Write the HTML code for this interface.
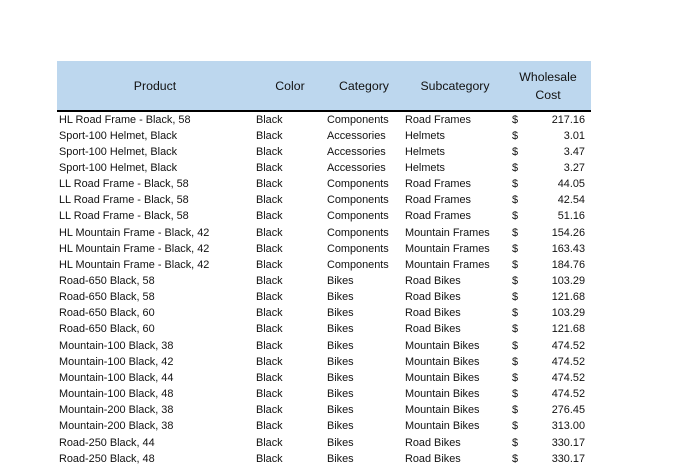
<!DOCTYPE html>
<html><head><meta charset="utf-8"><style>
body{margin:0;width:680px;height:459px;background:#fff;overflow:hidden;font-family:"Liberation Sans",sans-serif;color:#111;position:relative}
.hdr{position:absolute;left:57px;top:61px;width:534px;height:49px;background:#bdd7ee;border-bottom:2px solid #000;font-size:12.3px}
.hdr div{position:absolute;transform:translateX(-50%);text-align:center;white-space:nowrap}
.row{position:absolute;left:0;height:16px;font-size:10.9px;white-space:nowrap;width:680px}
.row span{position:absolute;top:0}
</style></head><body>
<div class="hdr">
<div style="left:98px;top:18px">Product</div>
<div style="left:233px;top:18px">Color</div>
<div style="left:307px;top:18px">Category</div>
<div style="left:398px;top:18px">Subcategory</div>
<div style="left:491px;top:7px;line-height:18px">Wholesale<br>Cost</div>
</div>
<div id="rows"></div>
<script>
const d=[["HL Road Frame - Black, 58","Components","Road Frames","217.16"],
["Sport-100 Helmet, Black","Accessories","Helmets","3.01"],
["Sport-100 Helmet, Black","Accessories","Helmets","3.47"],
["Sport-100 Helmet, Black","Accessories","Helmets","3.27"],
["LL Road Frame - Black, 58","Components","Road Frames","44.05"],
["LL Road Frame - Black, 58","Components","Road Frames","42.54"],
["LL Road Frame - Black, 58","Components","Road Frames","51.16"],
["HL Mountain Frame - Black, 42","Components","Mountain Frames","154.26"],
["HL Mountain Frame - Black, 42","Components","Mountain Frames","163.43"],
["HL Mountain Frame - Black, 42","Components","Mountain Frames","184.76"],
["Road-650 Black, 58","Bikes","Road Bikes","103.29"],
["Road-650 Black, 58","Bikes","Road Bikes","121.68"],
["Road-650 Black, 60","Bikes","Road Bikes","103.29"],
["Road-650 Black, 60","Bikes","Road Bikes","121.68"],
["Mountain-100 Black, 38","Bikes","Mountain Bikes","474.52"],
["Mountain-100 Black, 42","Bikes","Mountain Bikes","474.52"],
["Mountain-100 Black, 44","Bikes","Mountain Bikes","474.52"],
["Mountain-100 Black, 48","Bikes","Mountain Bikes","474.52"],
["Mountain-200 Black, 38","Bikes","Mountain Bikes","276.45"],
["Mountain-200 Black, 38","Bikes","Mountain Bikes","313.00"],
["Road-250 Black, 44","Bikes","Road Bikes","330.17"],
["Road-250 Black, 48","Bikes","Road Bikes","330.17"]];
let h="";d.forEach((r,i)=>{h+=`<div class="row" style="top:${113.5+i*16.15}px"><span style="left:59px">${r[0]}</span><span style="left:256px">Black</span><span style="left:327px">${r[1]}</span><span style="left:405px">${r[2]}</span><span style="left:512px">$</span><span style="right:95px">${r[3]}</span></div>`});
document.getElementById("rows").innerHTML=h;
</script>
</body></html>
